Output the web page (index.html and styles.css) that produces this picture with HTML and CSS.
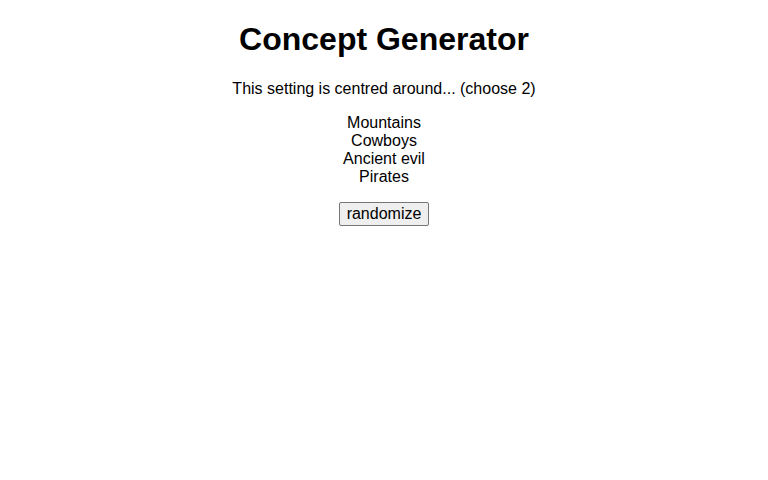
FILE: index.html
```html
<!DOCTYPE html>
<html lang="en">
<head>
<meta charset="utf-8">
<title>Concept Generator</title>
<link rel="stylesheet" href="styles.css">
</head>
<body>
<main class="generator">
  <h1 class="title">Concept Generator</h1>
  <p class="prompt">This setting is centred around... (choose 2)</p>
  <ul class="concepts">
    <li>Mountains</li>
    <li>Cowboys</li>
    <li>Ancient evil</li>
    <li>Pirates</li>
  </ul>
  <button class="randomize" type="button">randomize</button>
</main>
</body>
</html>
```
FILE: styles.css
```css
body {
  margin: 0 8px;
  font-family: "Liberation Sans", Arial, sans-serif;
  color: #000;
  background: #fff;
}

.generator {
  text-align: center;
  padding-top: 1px;
}

.title {
  font-size: 32px;
  font-weight: bold;
  margin: 20.44px 0 21.44px;
}

.prompt {
  font-size: 16px;
  margin: 16px 0;
}

.concepts {
  list-style: none;
  margin: 16px 0;
  padding: 0;
  font-size: 16px;
}

.randomize {
  font-family: "Liberation Sans", Arial, sans-serif;
  font-size: 16px;
  color: #000;
  background: #efefef;
  border: 1px solid #767676;
  border-radius: 2px;
  padding: 2px 7px;
}
```
